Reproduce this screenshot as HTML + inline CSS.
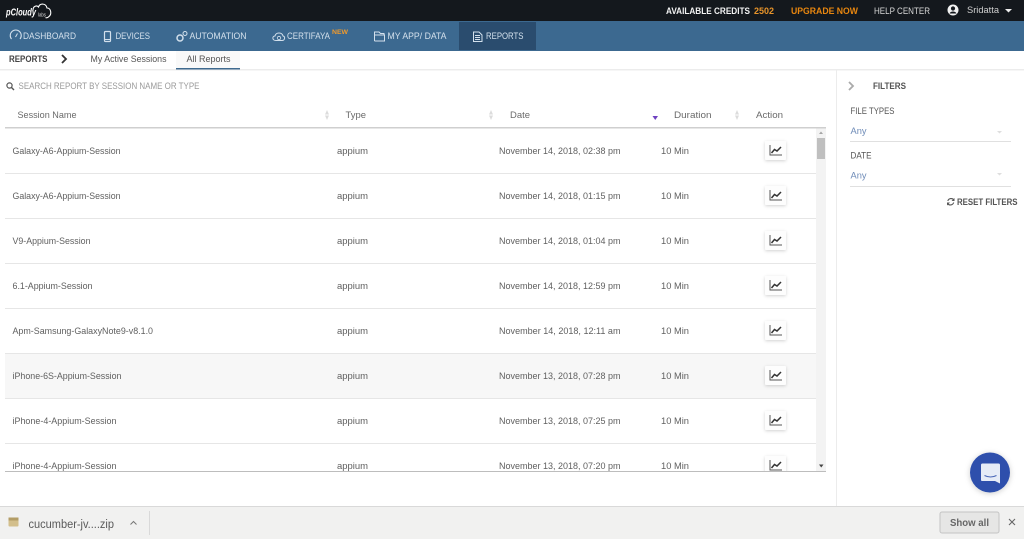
<!DOCTYPE html>
<html><head><meta charset="utf-8"><title>pCloudy Reports</title>
<style>
html,body{margin:0;padding:0;background:#fff;width:1024px;height:539px;overflow:hidden}
svg{display:block}
text{font-family:"Liberation Sans",sans-serif;font-size:9.500px;fill:#555}
.nav{fill:#d3e0ec;font-size:9.500px}
.cell{fill:#606060;font-size:9.500px}
.h{fill:#6a6a6a;font-size:9.500px}
</style></head><body>
<svg width="1024" height="539" viewBox="0 0 1024 539" xmlns="http://www.w3.org/2000/svg">
<defs>
<filter id="s" x="-30%" y="-30%" width="160%" height="160%"><feDropShadow dx="0" dy="1" stdDeviation="1.500" flood-color="#000" flood-opacity=".18"/></filter>
<filter id="c" x="-30%" y="-30%" width="160%" height="160%"><feDropShadow dx="0" dy="1" stdDeviation="3" flood-color="#000" flood-opacity=".2"/></filter>
<g id="btn">
<rect x="765" y="-10" width="21" height="19" rx="1.500" fill="#fdfdfd" filter="url(#s)"/>
<path d="M770 -6V4H782" fill="none" stroke="#555" stroke-width="1"/>
<path d="M771.500 2L774.500 -1.500L777 0L781 -4" fill="none" stroke="#333" stroke-width="1.500"/>
</g>
<g id="sort"><path d="M327 -5L329 -.5H325ZM327 5L325 .5H329Z" fill="#dcdcdc"/></g>
</defs>

<rect width="1024" height="22" fill="#14181d"/>
<rect y="21" width="1024" height="30" fill="#3c6990"/>
<rect x="459" y="22" width="77" height="28" fill="#2a4c6e"/>

<!-- logo -->
<text x="6" y="15.500" textLength="30" lengthAdjust="spacingAndGlyphs" style="font-size:10.500px;font-weight:bold;font-style:italic;fill:#fff">pCloudy</text>
<text x="38" y="16.500" textLength="8" lengthAdjust="spacingAndGlyphs" style="font-size:5px;fill:#ddd">labs</text>
<path d="M33 10C33 6 37 5 38.500 7C40 3 46 3 47 8C51 8 52 14 49 16.500C47.500 18 46 17.800 45.500 17.600" fill="none" stroke="#fff" stroke-width="1.100"/>

<!-- top right -->
<text x="666" y="14" textLength="84" lengthAdjust="spacingAndGlyphs" style="font-weight:bold;fill:#f2f2f2">AVAILABLE CREDITS</text>
<text x="754" y="14" textLength="20" lengthAdjust="spacingAndGlyphs" style="font-weight:bold;fill:#e8942a">2502</text>
<text x="791" y="14" textLength="67" lengthAdjust="spacingAndGlyphs" style="font-weight:bold;fill:#e8860f">UPGRADE NOW</text>
<text x="874" y="14" textLength="56" lengthAdjust="spacingAndGlyphs" style="fill:#d8d8d8">HELP CENTER</text>
<circle cx="953" cy="10" r="5.500" fill="#f2f2f2"/>
<circle cx="953" cy="8.500" r="2.100" fill="#14181d"/>
<path d="M949.500 13.500C950.500 10.800 955.500 10.800 956.500 13.500Z" fill="#14181d"/>
<text x="967" y="13" textLength="32" lengthAdjust="spacingAndGlyphs" style="fill:#d0d0d0">Sridatta</text>
<path d="M1005 9L1012 9L1008.500 12.500Z" fill="#eee"/>

<!-- nav -->
<path d="M11.500 39A5.500 5.500 0 1 1 20 39" fill="none" stroke="#d3e0ec" stroke-width="1.100"/><path d="M15.500 37L17.500 33.500" stroke="#d3e0ec"/>
<text class="nav" x="23" y="39" textLength="53" lengthAdjust="spacingAndGlyphs">DASHBOARD</text>
<rect x="104.500" y="31.500" width="6" height="10" rx="1" fill="none" stroke="#d3e0ec" stroke-width="1.200"/><path d="M104.500 39.500H110.500" stroke="#d3e0ec"/>
<text class="nav" x="115.500" y="39" textLength="34.500" lengthAdjust="spacingAndGlyphs">DEVICES</text>
<circle cx="180" cy="38" r="3" fill="none" stroke="#d3e0ec" stroke-width="1.500"/><circle cx="185" cy="33.500" r="2" fill="none" stroke="#d3e0ec"/>
<text class="nav" x="189.500" y="39" textLength="57" lengthAdjust="spacingAndGlyphs">AUTOMATION</text>
<path d="M276 40.500C272 40.500 272 36 275 36C276 32 282 32 283 36C285.500 36.500 285 40.500 282 40.500Z" fill="none" stroke="#d3e0ec"/><circle cx="279" cy="38" r="1.700" fill="none" stroke="#d3e0ec" stroke-width=".8"/>
<text class="nav" x="287" y="39" textLength="43" lengthAdjust="spacingAndGlyphs">CERTIFAYA</text>
<text x="332" y="34" textLength="16" lengthAdjust="spacingAndGlyphs" style="font-size:6px;font-weight:bold;fill:#ef9a2d">NEW</text>
<path d="M374.500 41V32H379L380.500 33.500H384V35M374.500 41H384.500V35H374.500" fill="none" stroke="#d3e0ec"/>
<text class="nav" x="387.500" y="39" textLength="59" lengthAdjust="spacingAndGlyphs">MY APP/ DATA</text>
<path d="M473.500 32H479L482 35V41.500H473.500ZM475 35.500H480M475 37.500H480M475 39.500H480" fill="none" stroke="#d3e0ec"/>
<text class="nav" x="486" y="39" textLength="37.500" lengthAdjust="spacingAndGlyphs">REPORTS</text>

<!-- sub bar -->
<rect y="69" width="1024" height="1.500" fill="#ececec"/>
<text x="9" y="62" textLength="38.500" lengthAdjust="spacingAndGlyphs" style="font-weight:bold;fill:#444">REPORTS</text>
<path d="M62 55L66 59L62 63" fill="none" stroke="#333" stroke-width="1.800"/>
<text x="90.500" y="62" textLength="76" lengthAdjust="spacingAndGlyphs" style="fill:#555">My Active Sessions</text>
<rect x="176" y="51" width="64" height="17" fill="#f9f9f9"/>
<rect x="176" y="68" width="64" height="1.500" fill="#3f6a8f"/>
<text x="186.500" y="62" textLength="44" lengthAdjust="spacingAndGlyphs" style="fill:#555">All Reports</text>

<!-- search -->
<circle cx="9.500" cy="85.500" r="2.600" fill="none" stroke="#555" stroke-width="1.200"/><path d="M11.500 87.500L14 90" stroke="#555" stroke-width="1.400"/>
<text x="18.500" y="89" textLength="181" lengthAdjust="spacingAndGlyphs" style="fill:#9a9a9a">SEARCH REPORT BY SESSION NAME OR TYPE</text>

<!-- table head -->
<text class="h" x="17.500" y="118" textLength="59" lengthAdjust="spacingAndGlyphs">Session Name</text>
<text class="h" x="345.500" y="118" textLength="20.500" lengthAdjust="spacingAndGlyphs">Type</text>
<text class="h" x="510" y="118" textLength="20" lengthAdjust="spacingAndGlyphs">Date</text>
<text class="h" x="674" y="118" textLength="37.500" lengthAdjust="spacingAndGlyphs">Duration</text>
<text class="h" x="756" y="118" textLength="27" lengthAdjust="spacingAndGlyphs">Action</text>
<use href="#sort" y="115"/><use href="#sort" x="164" y="115"/><use href="#sort" x="410" y="115"/>
<path d="M652.500 116H658L655.250 120Z" fill="#6f42c1"/>
<rect x="5" y="127" width="821" height="1.500" fill="#cfcfcf"/>

<!-- row highlight -->
<rect x="5" y="353" width="811" height="45" fill="#f7f7f7"/>
<!-- row lines -->
<g fill="#e6e6e6">
<rect x="5" y="173" width="811" height="1"/><rect x="5" y="218" width="811" height="1"/><rect x="5" y="263" width="811" height="1"/><rect x="5" y="308" width="811" height="1"/><rect x="5" y="353" width="811" height="1"/><rect x="5" y="398" width="811" height="1"/><rect x="5" y="443" width="811" height="1"/>
</g>

<!-- rows -->
<g>
<text class="cell" x="12.500" y="154" textLength="108" lengthAdjust="spacingAndGlyphs">Galaxy-A6-Appium-Session</text>
<text class="cell" x="337" y="154" textLength="31" lengthAdjust="spacingAndGlyphs">appium</text>
<text class="cell" x="499" y="154" textLength="121.500" lengthAdjust="spacingAndGlyphs">November 14, 2018, 02:38 pm</text>
<text class="cell" x="661" y="154" textLength="28" lengthAdjust="spacingAndGlyphs">10 Min</text>
<use href="#btn" y="151"/>

<text class="cell" x="12.500" y="199" textLength="108" lengthAdjust="spacingAndGlyphs">Galaxy-A6-Appium-Session</text>
<text class="cell" x="337" y="199" textLength="31" lengthAdjust="spacingAndGlyphs">appium</text>
<text class="cell" x="499" y="199" textLength="121.500" lengthAdjust="spacingAndGlyphs">November 14, 2018, 01:15 pm</text>
<text class="cell" x="661" y="199" textLength="28" lengthAdjust="spacingAndGlyphs">10 Min</text>
<use href="#btn" y="196"/>

<text class="cell" x="12.500" y="244" textLength="78" lengthAdjust="spacingAndGlyphs">V9-Appium-Session</text>
<text class="cell" x="337" y="244" textLength="31" lengthAdjust="spacingAndGlyphs">appium</text>
<text class="cell" x="499" y="244" textLength="121.500" lengthAdjust="spacingAndGlyphs">November 14, 2018, 01:04 pm</text>
<text class="cell" x="661" y="244" textLength="28" lengthAdjust="spacingAndGlyphs">10 Min</text>
<use href="#btn" y="241"/>

<text class="cell" x="12.500" y="289" textLength="80" lengthAdjust="spacingAndGlyphs">6.1-Appium-Session</text>
<text class="cell" x="337" y="289" textLength="31" lengthAdjust="spacingAndGlyphs">appium</text>
<text class="cell" x="499" y="289" textLength="121.500" lengthAdjust="spacingAndGlyphs">November 14, 2018, 12:59 pm</text>
<text class="cell" x="661" y="289" textLength="28" lengthAdjust="spacingAndGlyphs">10 Min</text>
<use href="#btn" y="286"/>

<text class="cell" x="12.500" y="334" textLength="140.500" lengthAdjust="spacingAndGlyphs">Apm-Samsung-GalaxyNote9-v8.1.0</text>
<text class="cell" x="337" y="334" textLength="31" lengthAdjust="spacingAndGlyphs">appium</text>
<text class="cell" x="499" y="334" textLength="121.500" lengthAdjust="spacingAndGlyphs">November 14, 2018, 12:11 am</text>
<text class="cell" x="661" y="334" textLength="28" lengthAdjust="spacingAndGlyphs">10 Min</text>
<use href="#btn" y="331"/>

<text class="cell" x="12.500" y="379" textLength="109" lengthAdjust="spacingAndGlyphs">iPhone-6S-Appium-Session</text>
<text class="cell" x="337" y="379" textLength="31" lengthAdjust="spacingAndGlyphs">appium</text>
<text class="cell" x="499" y="379" textLength="121.500" lengthAdjust="spacingAndGlyphs">November 13, 2018, 07:28 pm</text>
<text class="cell" x="661" y="379" textLength="28" lengthAdjust="spacingAndGlyphs">10 Min</text>
<use href="#btn" y="376"/>

<text class="cell" x="12.500" y="424" textLength="104" lengthAdjust="spacingAndGlyphs">iPhone-4-Appium-Session</text>
<text class="cell" x="337" y="424" textLength="31" lengthAdjust="spacingAndGlyphs">appium</text>
<text class="cell" x="499" y="424" textLength="121.500" lengthAdjust="spacingAndGlyphs">November 13, 2018, 07:25 pm</text>
<text class="cell" x="661" y="424" textLength="28" lengthAdjust="spacingAndGlyphs">10 Min</text>
<use href="#btn" y="421"/>

<text class="cell" x="12.500" y="469" textLength="104" lengthAdjust="spacingAndGlyphs">iPhone-4-Appium-Session</text>
<text class="cell" x="337" y="469" textLength="31" lengthAdjust="spacingAndGlyphs">appium</text>
<text class="cell" x="499" y="469" textLength="121.500" lengthAdjust="spacingAndGlyphs">November 13, 2018, 07:20 pm</text>
<text class="cell" x="661" y="469" textLength="28" lengthAdjust="spacingAndGlyphs">10 Min</text>
<use href="#btn" y="466"/>
</g>

<!-- clip below table -->
<rect x="0" y="471" width="836" height="35" fill="#fff"/>
<rect x="5" y="471" width="821" height="1" fill="#bdbdbd"/>

<!-- scrollbar -->
<rect x="816" y="128.500" width="10" height="342.500" fill="#f3f3f3"/>
<rect x="817" y="138" width="8" height="21" fill="#bfbfbf"/>
<path d="M821 131.500L823 134H819Z" fill="#a5a5a5"/>
<path d="M819 464.500H823.500L821.250 467.500Z" fill="#444"/>

<!-- filter panel -->
<rect x="836" y="70" width="1" height="436" fill="#ececec"/>
<path d="M849 82L853 86L849 90" fill="none" stroke="#aaa" stroke-width="1.800"/>
<text x="873" y="89" textLength="33" lengthAdjust="spacingAndGlyphs" style="font-weight:bold;fill:#555">FILTERS</text>
<text x="850.500" y="114" textLength="44" lengthAdjust="spacingAndGlyphs" style="fill:#555">FILE TYPES</text>
<text x="850.500" y="134" textLength="16" lengthAdjust="spacingAndGlyphs" style="fill:#6f8cb8">Any</text>
<path d="M997 131H1002L999.500 133.500Z" fill="#dedede"/>
<rect x="850" y="141" width="161" height="1" fill="#e0e0e0"/>
<text x="850.500" y="158.500" textLength="21" lengthAdjust="spacingAndGlyphs" style="fill:#555">DATE</text>
<text x="850.500" y="178.500" textLength="16" lengthAdjust="spacingAndGlyphs" style="fill:#6f8cb8">Any</text>
<path d="M997 173H1002L999.500 175.500Z" fill="#dedede"/>
<rect x="850" y="186" width="161" height="1" fill="#e0e0e0"/>
<path d="M954 200A3.500 3.500 0 0 0 947.800 201M947.500 203.500A3.500 3.500 0 0 0 953.700 202.500" fill="none" stroke="#555" stroke-width="1.100"/>
<path d="M954.500 198V201H951.500ZM947 205.500V202.500H950Z" fill="#555"/>
<text x="957" y="205" textLength="60.500" lengthAdjust="spacingAndGlyphs" style="font-weight:bold;fill:#555">RESET FILTERS</text>

<!-- chat -->
<circle cx="990" cy="472.500" r="20" fill="#2d50ac" filter="url(#c)"/>
<path d="M982.500 463.500Q981 463.500 981 465V480Q981 481 982.500 481H995L1000 483.500V465Q1000 463.500 998.500 463.500Z" fill="#e6ecf7"/>
<path d="M984.500 475.500Q990.500 478.500 996.500 475.500" fill="none" stroke="#4a68b8" stroke-width="1"/>

<!-- download bar -->
<rect y="506" width="1024" height="33" fill="#f1f1f0"/>
<rect y="506" width="1024" height="1" fill="#d9d9d9"/>
<rect x="8.500" y="517.500" width="10" height="9" rx="1" fill="#d3bf8c"/>
<rect x="8.500" y="517.500" width="10" height="3" fill="#b39d66"/>
<text x="28.500" y="528" textLength="85.500" lengthAdjust="spacingAndGlyphs" style="font-size:11.500px;fill:#5a5a5a">cucumber-jv....zip</text>
<path d="M130.500 524.500L133.500 521.500L136.500 524.500" fill="none" stroke="#777" stroke-width="1"/>
<rect x="149" y="511" width="1" height="24" fill="#d9d9d9"/>
<rect x="940" y="512" width="59" height="21" rx="2" fill="#e6e6e5" stroke="#c4c4c4"/>
<text x="950" y="526" textLength="39" lengthAdjust="spacingAndGlyphs" style="font-size:10.500px;font-weight:bold;fill:#666">Show all</text>
<path d="M1009 519L1015 525M1015 519L1009 525" stroke="#666" stroke-width="1.100"/>
</svg>
</body></html>
